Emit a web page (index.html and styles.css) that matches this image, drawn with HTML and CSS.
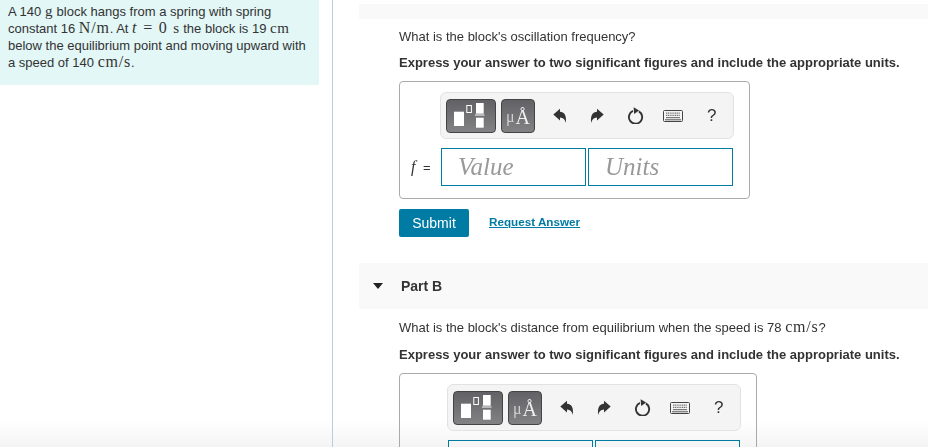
FILE: index.html
```html
<!DOCTYPE html>
<html lang="en-US">
  <head>
    <meta charset="UTF-8">
    <title>Simple harmonic motion problem</title>
    <link rel="stylesheet" href="styles.css">
  </head>
  <body>
    <!-- Icons used by both toolbars -->
    <svg class="icon-defs" width="0" height="0">
      <symbol id="icon-template" viewBox="0 0 50 34">
        <rect x="8" y="12.7" width="10" height="14.3" fill="#fff"/>
        <rect x="20.8" y="6.5" width="4.6" height="7" fill="none" stroke="#fff" stroke-width="1"/>
        <rect x="30" y="4" width="7.7" height="10.7" fill="#fff"/>
        <rect x="29" y="15.5" width="9.5" height="1" fill="#fff"/>
        <rect x="30" y="18.7" width="7.7" height="10" fill="#fff"/>
      </symbol>
      <symbol id="icon-undo" viewBox="0 0 14 16">
        <path d="M0.3 6.5 L7 0.8 L7 3.8 C11.2 3.8 13.8 7.5 12.8 15 C12 11.4 10.5 9.6 7 9.4 L7 12.4 Z" fill="#333"/>
      </symbol>
      <symbol id="icon-redo" viewBox="0 0 14 16">
        <path d="M13.7 6.5 L7 0.8 L7 3.8 C2.8 3.8 0.2 7.5 1.2 15 C2 11.4 3.5 9.6 7 9.4 L7 12.4 Z" fill="#333"/>
      </symbol>
      <symbol id="icon-reset" viewBox="0 0 18 18">
        <path d="M6.3 4.2 A7 7 0 1 0 12.6 4.6" fill="none" stroke="#333" stroke-width="2"/>
        <path d="M7 0.3 L12.8 3.8 L7.6 7.4 Z" fill="#333"/>
      </symbol>
      <symbol id="icon-keyboard" viewBox="0 0 20 12">
        <rect x="0.5" y="0.5" width="19" height="11" rx="1" fill="#f4f4f4" stroke="#444"/>
        <path d="M3 3.2 H17 M3 5.4 H17" stroke="#777" stroke-width="1.2" stroke-dasharray="1.2 .6"/>
        <path d="M3 7.6 H17" stroke="#777" stroke-width="1.2"/>
        <path d="M2 9.8 H18" stroke="#555" stroke-width="1"/>
      </symbol>
    </svg>

    <div class="page">
      <aside class="sidebar">
        <div class="intro">
          <div>A 140 <span class="math">g</span> block hangs from a spring with spring</div>
          <div>constant 16 <span class="math math-big">N/m</span>. At <span class="math math-big math-eq"><i>t</i> = 0</span> <span class="math">s</span> the block is 19 <span class="math">cm</span></div>
          <div>below the equilibrium point and moving upward with</div>
          <div>a speed of 140 <span class="math math-big">cm/s</span>.</div>
        </div>
      </aside>

      <main class="content">
        <div class="part-bar part-bar-top"></div>

        <section class="part">
          <p class="question">What is the block's oscillation frequency?</p>
          <p class="instruction">Express your answer to two significant figures and include the appropriate units.</p>

          <div class="answer-box">
            <div class="toolbar">
              <span class="tool-btn tool-template"><svg width="50" height="34"><use href="#icon-template"/></svg></span>
              <span class="tool-btn tool-units"><span class="tool-mu">μ</span>Å</span>
              <span class="tool-icons">
                <svg width="14" height="16"><use href="#icon-undo"/></svg>
                <svg width="14" height="16"><use href="#icon-redo"/></svg>
                <svg width="17" height="17"><use href="#icon-reset"/></svg>
                <svg class="tool-keyboard" width="20" height="12"><use href="#icon-keyboard"/></svg>
                <span class="tool-help">?</span>
              </span>
            </div>
            <div class="answer-row">
              <span class="answer-label"><i>f</i> =</span>
              <span class="field">Value</span>
              <span class="field">Units</span>
            </div>
          </div>

          <div class="actions">
            <button class="submit">Submit</button>
            <a class="request" href="#">Request Answer</a>
          </div>
        </section>

        <div class="part-bar">
          <span class="caret"></span>
          <span class="part-title">Part B</span>
        </div>

        <section class="part part-b">
          <p class="question">What is the block's distance from equilibrium when the speed is 78 <span class="math math-big">cm/s</span>?</p>
          <p class="instruction">Express your answer to two significant figures and include the appropriate units.</p>

          <div class="answer-box answer-box-wide">
            <div class="toolbar">
              <span class="tool-btn tool-template"><svg width="50" height="34"><use href="#icon-template"/></svg></span>
              <span class="tool-btn tool-units"><span class="tool-mu">μ</span>Å</span>
              <span class="tool-icons">
                <svg width="14" height="16"><use href="#icon-undo"/></svg>
                <svg width="14" height="16"><use href="#icon-redo"/></svg>
                <svg width="17" height="17"><use href="#icon-reset"/></svg>
                <svg class="tool-keyboard" width="20" height="12"><use href="#icon-keyboard"/></svg>
                <span class="tool-help">?</span>
              </span>
            </div>
            <div class="answer-row">
              <span class="field"></span>
              <span class="field"></span>
            </div>
          </div>
        </section>
      </main>
    </div>

    <div class="bottom-fade"></div>
  </body>
</html>
```

FILE: styles.css
```css
/* Global styles */
html, body {
    height: 447px;
    overflow: hidden;
}

body {
    margin: 0;
    background: #fff;
    color: #333;
    font-family: "Liberation Sans", Arial, sans-serif;
    font-size: 13px;
}

.icon-defs {
    display: block;
    height: 0;
}

.page {
    display: flex;
    align-items: stretch;
    height: 447px;
    overflow: hidden;
}

/* Left column */
.sidebar {
    flex: 0 0 332px;
    border-right: 1px solid #b9cbe0;
}

.intro {
    width: 319px;
    height: 85px;
    box-sizing: border-box;
    padding: 3px 8px 0;
    background: #e2f7f6;
    line-height: 17px;
    white-space: nowrap;
}

/* Stand-in for the math font, which runs wider than Liberation Serif */
.math {
    font-family: "Liberation Serif", serif;
    font-size: 15px;
    line-height: 1;
    letter-spacing: 0.6px;
}

.math-big {
    font-size: 16px;
    letter-spacing: 0.8px;
}

.math-eq {
    margin-right: 2px;
    word-spacing: 1px;
}

/* Right column */
.content {
    flex: 1;
    min-width: 0;
    height: 447px;
    overflow: hidden;
    padding-left: 26px;
}

.part-bar {
    display: flex;
    align-items: center;
    height: 46px;
    background: #f9f9f9;
}

.part-bar-top {
    height: 15px;
    margin-top: 4px;
}

.caret {
    width: 0;
    height: 0;
    margin-left: 14px;
    border-left: 5.5px solid transparent;
    border-right: 5.5px solid transparent;
    border-top: 6px solid #222;
}

.part-title {
    margin-left: 18px;
    font-size: 14px;
    font-weight: bold;
}

.part {
    padding-left: 40px;
    height: 244px;
    box-sizing: border-box;
}

.part-b {
    height: auto;
}

.question {
    margin: 0;
    padding-top: 9px;
    line-height: 17px;
}

.part-b .question {
    padding-top: 10px;
}

.instruction {
    margin: 9px 0 0;
    font-weight: bold;
    line-height: 17px;
}

.part-b .instruction {
    margin-top: 10px;
}

/* Answer box */
.answer-box {
    width: 351px;
    height: 118px;
    box-sizing: border-box;
    margin-top: 10px;
    padding: 10px 16px 0 40px;
    border: 1px solid #aaa;
    border-radius: 4px;
}

.answer-box-wide {
    width: 358px;
    margin-top: 10px;
    padding-left: 47px;
}

.toolbar {
    display: flex;
    align-items: center;
    width: 294px;
    height: 47px;
    box-sizing: border-box;
    padding-left: 5px;
    background: #f4f4f4;
    border: 1px solid #e2e2e2;
    border-radius: 6px;
}

.tool-btn {
    display: flex;
    align-items: center;
    justify-content: center;
    height: 34px;
    box-sizing: border-box;
    margin-right: 5px;
    background: linear-gradient(#626266, #828284);
    border: 1px solid #444;
    border-radius: 4px;
}

.tool-btn svg {
    flex: none;
}

.tool-template {
    width: 50px;
}

.tool-units {
    width: 34px;
    padding-top: 2px;
    color: #f0f0f0;
    font-family: "Liberation Serif", serif;
    font-size: 20px;
    line-height: 1;
}

.tool-mu {
    margin-right: 1px;
    color: #cfcfcf;
    font-size: 16px;
}

.tool-icons {
    display: flex;
    align-items: center;
    gap: 23px;
    padding-left: 13px;
    color: #333;
}

.tool-keyboard {
    margin-left: -4px;
}

.tool-help {
    margin-left: 1px;
    font-size: 17px;
    line-height: 1;
}

.answer-row {
    display: flex;
    align-items: center;
    gap: 2px;
    margin-top: 9px;
    margin-left: 1px;
    position: relative;
}

.answer-label {
    position: absolute;
    left: -30px;
    font-size: 13px;
    word-spacing: 4px;
}

.answer-label i {
    font-family: "Liberation Serif", serif;
    font-size: 16px;
}

.field {
    flex: 0 0 145px;
    height: 38px;
    box-sizing: border-box;
    padding-left: 16px;
    border: 1px solid #007ba4;
    color: #999;
    font-family: "Liberation Serif", serif;
    font-size: 25px;
    font-style: italic;
    line-height: 35px;
}

/* Buttons below the box */
.actions {
    display: flex;
    align-items: center;
    margin-top: 10px;
}

.submit {
    width: 70px;
    height: 28px;
    padding: 0;
    background: #007ba4;
    border: none;
    border-radius: 2px;
    color: #fff;
    font-family: "Liberation Sans", sans-serif;
    font-size: 14px;
}

.request {
    margin-left: 20px;
    margin-top: -3px;
    color: #007ba4;
    font-size: 11.7px;
    font-weight: bold;
}

/* Grey fade along the bottom of the window, behind the content */
.bottom-fade {
    position: fixed;
    z-index: -1;
    left: 0;
    right: 0;
    bottom: 0;
    height: 27px;
    background: linear-gradient(rgba(244, 244, 244, 0), #f4f4f4);
    pointer-events: none;
}
```
